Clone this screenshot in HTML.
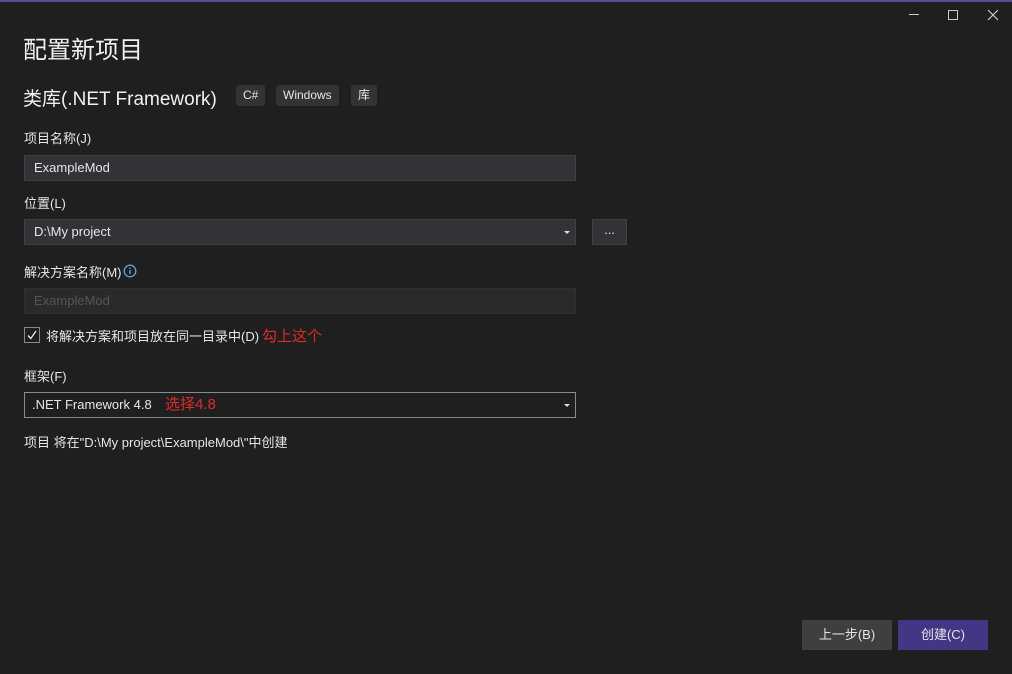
<!DOCTYPE html>
<html><head><meta charset="utf-8"><style>
*{margin:0;padding:0;box-sizing:border-box}
body{width:1012px;height:674px;background:#1f1f1f;color:#e6e6e6;font-family:"Liberation Sans","Noto Sans CJK SC",sans-serif;position:relative;overflow:hidden;font-size:13px}
.a{position:absolute;white-space:nowrap}
.top{left:0;top:0;width:1012px;height:2px;background:#5b4a9e}
.in{background:#333337;border:1px solid #3f3f46;height:26px;padding-left:9px;line-height:24px;font-size:13px}
.tag{background:#333333;border-radius:3px;height:21px;line-height:21px;font-size:12px;padding:0 7px;top:85px}
.arr{position:absolute;right:5px;top:11px;width:0;height:0;border-left:3px solid transparent;border-right:3px solid transparent;border-top:3px solid #ddd}
.red{color:#e02a2a}
.btn{height:30px;line-height:30px;text-align:center;font-size:13px;top:620px;width:90px}
</style></head><body>
<div class="a top"></div>
<div class="a" style="left:909px;top:14px;width:10px;height:1px;background:#ccc"></div>
<div class="a" style="left:948px;top:10px;width:10px;height:10px;border:1px solid #ccc"></div>
<svg class="a" style="left:987px;top:9px" width="12" height="12"><path d="M1 1L11 11M11 1L1 11" stroke="#ccc" stroke-width="1.2"/></svg>
<div class="a" style="left:23px;top:30px;font-size:24px;color:#f0f0f0">配置新项目</div>
<div class="a" style="left:23px;top:84px;font-size:19px;color:#f0f0f0">类库(.NET Framework)</div>
<div class="a tag" style="left:236px">C#</div>
<div class="a tag" style="left:276px">Windows</div>
<div class="a tag" style="left:351px">库</div>
<div class="a" style="left:24px;top:128px">项目名称(J)</div>
<div class="a in" style="left:24px;top:155px;width:552px">ExampleMod</div>
<div class="a" style="left:24px;top:193px">位置(L)</div>
<div class="a in" style="left:24px;top:219px;width:552px">D:\My project<span class="arr"></span></div>
<div class="a in" style="left:592px;top:219px;width:35px;padding:0;text-align:center;line-height:20px">...</div>
<div class="a" style="left:24px;top:262px">解决方案名称(M)</div>
<svg class="a" style="left:123px;top:264px" width="14" height="14"><circle cx="7" cy="7" r="5.8" fill="none" stroke="#5aa7d8" stroke-width="1.3"/><rect x="6.3" y="6" width="1.4" height="4" fill="#5aa7d8"/><rect x="6.3" y="3.6" width="1.4" height="1.4" fill="#5aa7d8"/></svg>
<div class="a in" style="left:24px;top:288px;width:552px;background:#2a2a2a;border-color:#2f2f2f;color:#555">ExampleMod</div>
<div class="a" style="left:24px;top:327px;width:16px;height:16px;border:1px solid #8a8a8a"></div>
<svg class="a" style="left:27px;top:330px" width="10" height="10"><path d="M1 5.5L3.8 8.5L9 1" fill="none" stroke="#eee" stroke-width="1.3"/></svg>
<div class="a" style="left:46px;top:326px">将解决方案和项目放在同一目录中(D)</div>
<div class="a red" style="left:262px;top:325px;font-size:15px">勾上这个</div>
<div class="a" style="left:24px;top:366px">框架(F)</div>
<div class="a in" style="left:24px;top:392px;width:552px;background:#1f1f1f;border-color:#8a8a8a;padding-left:7px">.NET Framework 4.8<span class="arr"></span></div>
<div class="a red" style="left:165px;top:393px;font-size:15px">选择4.8</div>
<div class="a" style="left:24px;top:432px">项目 将在"D:\My project\ExampleMod\"中创建</div>
<div class="a btn" style="left:802px;background:#3f3f3f">上一步(B)</div>
<div class="a btn" style="left:898px;background:#433685">创建(C)</div>
</body></html>
